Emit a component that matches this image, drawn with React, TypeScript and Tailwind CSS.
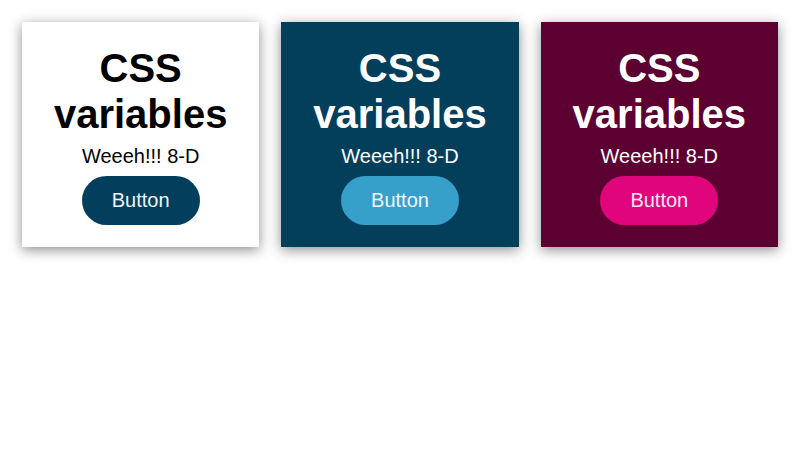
const cards = [
  {
    card: "bg-white text-black",
    button: "bg-[#033f5c] text-[#eef6fa]",
  },
  {
    card: "bg-[#033e5b] text-white",
    button: "bg-[#36a0cb] text-[#eef8fc]",
  },
  {
    card: "bg-[#5b0030] text-white",
    button: "bg-[#e0057c] text-[#fde8f2]",
  },
];

export default function App() {
  return (
    <div className="flex w-[800px] h-[450px] gap-[22px] p-[22px] items-start bg-white font-['Liberation_Sans',Arial,sans-serif]">
      {cards.map((c, i) => (
        <div
          key={i}
          className={`flex-1 h-[225px] flex flex-col items-center pt-[23px] shadow-[0_3px_12px_rgba(0,0,0,0.45)] ${c.card}`}
        >
          <h1 className="text-[40px] leading-[46px] font-bold text-center">
            CSS
            <br />
            variables
          </h1>
          <p className="text-[20px] leading-[23px] mt-[8px]">Weeeh!!! 8-D</p>
          <button
            className={`mt-[8px] w-[118px] h-[49px] rounded-full text-[20px] leading-[23px] ${c.button}`}
          >
            Button
          </button>
        </div>
      ))}
    </div>
  );
}
